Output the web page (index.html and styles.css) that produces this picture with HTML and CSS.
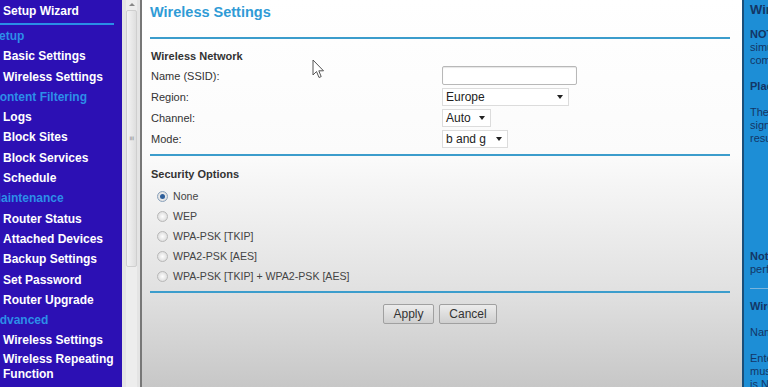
FILE: index.html
```html
<!DOCTYPE html>
<html lang="en">
<head>
    <meta charset="UTF-8">
    <meta name="viewport" content="width=device-width, initial-scale=1.0">
    <title>Wireless Settings</title>
    <link rel="stylesheet" href="styles.css">
</head>
<body>
  <div class="page">
    <div class="menu">
        <div class="wiz">Setup Wizard</div>
        <div class="head first">Setup</div>
        <div class="item">Basic Settings</div>
        <div class="item">Wireless Settings</div>
        <div class="head">Content Filtering</div>
        <div class="item">Logs</div>
        <div class="item">Block Sites</div>
        <div class="item">Block Services</div>
        <div class="item">Schedule</div>
        <div class="head">Maintenance</div>
        <div class="item">Router Status</div>
        <div class="item">Attached Devices</div>
        <div class="item">Backup Settings</div>
        <div class="item">Set Password</div>
        <div class="item">Router Upgrade</div>
        <div class="head">Advanced</div>
        <div class="item">Wireless Settings</div>
        <div class="item two">Wireless Repeating<br>Function</div>
        <div class="item">Port Forwarding / Port Triggering</div>
    </div>

    <div class="scroll">
        <div class="track">
            <div class="arrow"></div>
            <div class="thumb"><span class="grip">&#8801;</span></div>
        </div>
    </div>

    <div class="main">
        <h1 class="title">Wireless Settings</h1>

        <div class="sect">
            <div class="sect-head">Wireless Network</div>
            <div class="row">
                <div class="lbl">Name (SSID):</div>
                <div><div class="txt"></div></div>
            </div>
            <div class="row">
                <div class="lbl">Region:</div>
                <div><div class="sel sel-region">Europe<span class="caret"></span></div></div>
            </div>
            <div class="row">
                <div class="lbl">Channel:</div>
                <div><div class="sel sel-chan">Auto<span class="caret"></span></div></div>
            </div>
            <div class="row">
                <div class="lbl">Mode:</div>
                <div><div class="sel sel-mode">b and g<span class="caret"></span></div></div>
            </div>
        </div>

        <div class="sect">
            <div class="sect-head sec">Security Options</div>
            <div class="radios">
                <div class="opt"><span class="radio on"></span>None</div>
                <div class="opt"><span class="radio"></span>WEP</div>
                <div class="opt"><span class="radio"></span>WPA-PSK [TKIP]</div>
                <div class="opt"><span class="radio"></span>WPA2-PSK [AES]</div>
                <div class="opt"><span class="radio"></span>WPA-PSK [TKIP] + WPA2-PSK [AES]</div>
            </div>
        </div>

        <div class="btns">
            <button class="btn apply">Apply</button>
            <button class="btn cancel">Cancel</button>
        </div>

        <svg class="cursor" width="14" height="21" viewBox="0 0 14 21">
            <path d="M1 1 L1 16 L4.5 12.5 L7 18.5 L9.2 17.6 L6.8 11.8 L11.5 11.8 Z" fill="#fff" stroke="#555" stroke-width="1" stroke-linejoin="round"/>
        </svg>
    </div>

    <div class="help">
        <div class="help-title">Wireless Settings Help</div>
        <p><b>NOTE:</b> For best results, place<br>simultaneously the router in a<br>common area.</p>
        <p class="b">Place the router</p>
        <p>The router signal is strong<br>signal strength and<br>results may vary</p>
        <p class="note"><b>Note:</b> Range and<br>performance</p>
        <div class="help-line"></div>
        <p class="b">Wireless Network</p>
        <p>Name (SSID)</p>
        <p>Enter a value of up to<br>must match the SSID<br>is NETGEAR</p>
    </div>
  </div>
</body>
</html>
```

FILE: styles.css
```css
html, body{
    margin: 0;
    padding: 0;
    height: 100%;
    overflow: hidden;
}
body{
    font-family: "Liberation Sans", Arial, sans-serif;
}
.page{
    display: flex;
    height: 387px;
}

/* left menu */
.menu{
    width: 122px;
    flex: none;
    background-color: #2c10b4;
    color: #fff;
    font-weight: bold;
    font-size: 12px;
    overflow: hidden;
    white-space: nowrap;
}
.wiz{
    line-height: 22px;
    padding-left: 3px;
    padding-bottom: 1px;
    border-bottom: 2px solid #2a8ee6;
    margin-right: 8px;
}
.item, .head{
    line-height: 20.3px;
    padding-left: 3px;
}
.head{
    color: #2c8ee8;
    margin-left: -12px;
}
.first{
    margin-top: 1px;
}
.two{
    line-height: 15px;
    padding-top: 1px;
    padding-bottom: 3px;
}

/* scrollbar */
.scroll{
    width: 18px;
    flex: none;
    background-color: #e4e4e4;
    border-right: 2px solid #777;
    display: flex;
}
.track{
    width: 11px;
    margin-left: 4px;
    background-color: #ededed;
}
.arrow{
    width: 0;
    height: 0;
    margin: 3px auto 0;
    border-left: 3px solid transparent;
    border-right: 3px solid transparent;
    border-bottom: 3px solid #888;
}
.thumb{
    margin-top: 4px;
    height: 255px;
    background: linear-gradient(to right, #f4f4f4, #dedede);
    border: 1px solid #cfcfcf;
    border-radius: 2px;
    display: flex;
    align-items: center;
    justify-content: center;
}
.grip{
    font-size: 8px;
    color: #888;
    transform: rotate(90deg);
}

/* main form */
.main{
    width: 580px;
    flex: none;
    padding: 0 12px 0 8px;
    background: linear-gradient(#ffffff 0, #fbfbfb 40%, #e0e0e0 76%, #c7c7c7 100%);
    position: relative;
    color: #333;
    font-size: 11px;
}
.title{
    margin: 0;
    font-size: 14.5px;
    line-height: 24px;
    padding-bottom: 13px;
    color: #2f9bd6;
    border-bottom: 2px solid #3c9dcc;
}
.sect{
    border-bottom: 2px solid #3c9dcc;
    padding-bottom: 5px;
    padding-left: 1px;
}
.sect-head{
    font-weight: bold;
    line-height: 18px;
    margin-top: 8px;
}
.sec{
    margin-top: 9px;
}
.row{
    display: grid;
    grid-template-columns: 291px auto;
    height: 21px;
    align-items: center;
}
.txt{
    width: 133px;
    height: 17px;
    border: 1px solid #b8b8b8;
    border-radius: 2px;
    background-color: #fff;
    box-shadow: inset 0 1px 1px #e6e6e6;
}
.sel{
    display: flex;
    align-items: center;
    justify-content: space-between;
    height: 16px;
    border: 1px solid #dcdcdc;
    background-color: #fff;
    padding: 0 5px 0 3px;
    font-size: 12px;
    color: #222;
    box-sizing: content-box;
}
.sel-region{ width: 117px; }
.sel-chan{ width: 39px; }
.sel-mode{ width: 56px; }
.caret{
    width: 0;
    height: 0;
    border-left: 3px solid transparent;
    border-right: 3px solid transparent;
    border-top: 4px solid #222;
}

.radios{
    margin-top: 3px;
    padding-left: 6px;
}
.opt{
    height: 20px;
    display: flex;
    align-items: center;
    color: #444;
    font-size: 10.6px;
}
.radio{
    width: 9px;
    height: 9px;
    border: 1px solid #b8b8b8;
    border-radius: 50%;
    background: radial-gradient(#fdfdfd, #d4d4d4);
    margin-right: 5px;
    position: relative;
}
.radio.on{
    border-color: #8aa2bc;
}
.radio.on::after{
    content: "";
    position: absolute;
    left: 2px;
    top: 2px;
    width: 5px;
    height: 5px;
    border-radius: 50%;
    background-color: #2f5f9a;
}
.sect:last-of-type{
    padding-bottom: 7px;
}

.btns{
    display: flex;
    justify-content: center;
    gap: 5px;
    margin-top: 11px;
}
.btn{
    font-family: "Liberation Sans", Arial, sans-serif;
    font-size: 12px;
    color: #333;
    height: 20px;
    padding: 0;
    border: 1px solid #a0a0a0;
    border-radius: 2px;
    background: linear-gradient(#ececec, #cfcfcf);
}
.apply{ width: 51px; }
.cancel{ width: 58px; }

.cursor{
    position: absolute;
    left: 170px;
    top: 59px;
}

/* help panel */
.help{
    flex: 1;
    background-color: #1d8ed6;
    border-left: 2px solid #1b4f7a;
    color: #133666;
    font-size: 11px;
    line-height: 13px;
    padding-left: 6px;
    white-space: nowrap;
    overflow: hidden;
}
.help-title{
    font-weight: bold;
    font-size: 13px;
    line-height: 20px;
    margin-bottom: 8px;
}
.help p{
    margin: 0 0 13px;
}
.help .b{
    font-weight: bold;
}
.help .note{
    margin-top: 105px;
    margin-bottom: 12px;
}
.help-line{
    height: 1px;
    background-color: #7ab4dc;
    margin-bottom: 11px;
}
```
